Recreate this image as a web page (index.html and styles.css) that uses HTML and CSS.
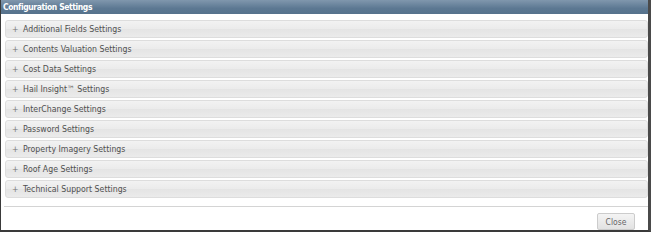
FILE: index.html
```html
<!DOCTYPE html>
<html lang="en">
<head>
    <meta charset="UTF-8">
    <title>Configuration Settings</title>
    <link rel="stylesheet" href="styles.css">
</head>
<body>
    <div class="dialog">
        <div class="titlebar">Configuration Settings</div>
        <div class="content">
            <div class="section"><span class="plus">+</span>Additional Fields Settings</div>
            <div class="section"><span class="plus">+</span>Contents Valuation Settings</div>
            <div class="section"><span class="plus">+</span>Cost Data Settings</div>
            <div class="section"><span class="plus">+</span>Hail Insight™ Settings</div>
            <div class="section"><span class="plus">+</span>InterChange Settings</div>
            <div class="section"><span class="plus">+</span>Password Settings</div>
            <div class="section"><span class="plus">+</span>Property Imagery Settings</div>
            <div class="section"><span class="plus">+</span>Roof Age Settings</div>
            <div class="section"><span class="plus">+</span>Technical Support Settings</div>
        </div>
        <div class="buttons">
            <button class="close">Close</button>
        </div>
    </div>
</body>
</html>
```

FILE: styles.css
```css
* {
    margin: 0;
    padding: 0;
    box-sizing: border-box;
}
body {
    background-color: white;
    font-family: "DejaVu Sans", Verdana, sans-serif;
}
.dialog {
    width: 651px;
    height: 232px;
    border-left: 1px solid #3a3a3a;
    border-right: 3px solid #4a4a4a;
    border-bottom: 2px solid #3a3a3a;
    background-color: white;
    display: flex;
    flex-direction: column;
}
.titlebar {
    height: 14px;
    line-height: 14px;
    padding-left: 2px;
    background: linear-gradient(#8097ad, #5c7892 60%, #56728c);
    color: white;
    font-weight: bold;
    font-size: 8.5px;
    font-stretch: condensed;
    letter-spacing: -0.4px;
}
.content {
    display: flex;
    flex-direction: column;
    gap: 2px;
    margin-left: 3px;
    padding: 6px 0 8px 1px;
    border-bottom: 1px solid #d4d4d4;
}
.section {
    height: 18px;
    line-height: 17px;
    padding-left: 6px;
    border: 1px solid #dddddd;
    border-radius: 3px;
    background: linear-gradient(#f2f2f2, #ebebeb 50%, #e4e4e4 51%, #ebebeb);
    color: #505050;
    font-family: "DejaVu Sans Condensed", "DejaVu Sans", sans-serif;
    font-size: 8.7px;
}
.plus {
    display: inline-block;
    width: 11px;
    color: #777777;
}
.buttons {
    flex: 1;
    display: flex;
    justify-content: flex-end;
    align-items: flex-end;
    padding-right: 13px;
}
.close {
    width: 38px;
    height: 17px;
    border: 1px solid #cccccc;
    border-radius: 2px;
    background: linear-gradient(#f4f4f4, #e2e2e2);
    color: #666666;
    font-family: "DejaVu Sans Condensed", "DejaVu Sans", sans-serif;
    font-size: 8.5px;
}
```
